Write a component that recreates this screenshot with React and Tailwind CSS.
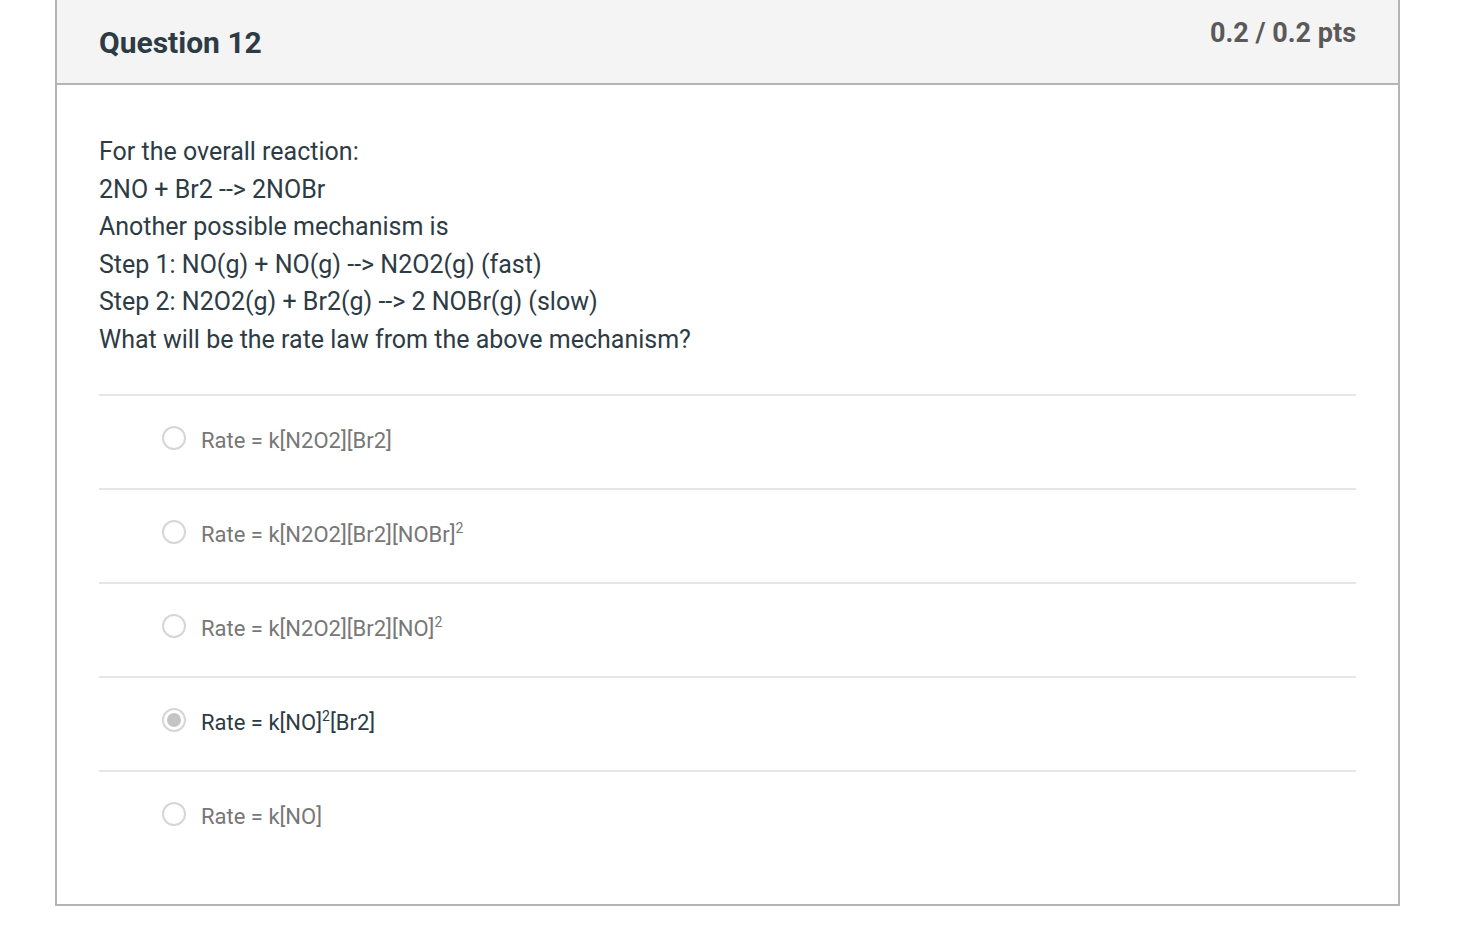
import React from "react";

const Sup = () => <sup className="text-[14px] -top-[9px]">2</sup>;

const options = [
  { label: <>Rate = k[N2O2][Br2]</>, selected: false },
  { label: <>Rate = k[N2O2][Br2][NOBr]<Sup /></>, selected: false },
  { label: <>Rate = k[N2O2][Br2][NO]<Sup /></>, selected: false },
  { label: <>Rate = k[NO]<Sup />[Br2]</>, selected: true },
  { label: <>Rate = k[NO]</>, selected: false },
];

const Radio = ({ selected }) => (
  <span className="w-[24px] h-[24px] rounded-full border-2 border-[#d6d6d6] bg-white flex items-center justify-center shrink-0">
    {selected && <span className="w-[14px] h-[14px] rounded-full bg-[#c4c4c4]" />}
  </span>
);

const App = () => {
  return (
    <div className="min-h-[943px] bg-white font-['Roboto',sans-serif]">
      <div className="ml-[55px] w-[1345px] border-x-2 border-b-2 border-[#b4b4b4] bg-white">
        {/* Header */}
        <div className="h-[85px] bg-[#f4f4f4] border-b-2 border-[#b4b4b4] px-[42px] flex justify-between">
          <h2 className="text-[30px] font-bold text-[#2d3b45] pt-[23px] leading-[40px]">Question 12</h2>
          <span className="text-[27px] font-bold text-[#5a5a5a] pt-[13px] leading-[40px]">0.2 / 0.2 pts</span>
        </div>

        {/* Body */}
        <div className="px-[42px] pt-[48px] pb-[40px]">
          <div className="text-[25px] leading-[37.5px] text-[#2d3b45]">
            <p>For the overall reaction:</p>
            <p>2NO + Br2 --&gt; 2NOBr</p>
            <p>Another possible mechanism is</p>
            <p>Step 1: NO(g) + NO(g) --&gt; N2O2(g) (fast)</p>
            <p>Step 2: N2O2(g) + Br2(g) --&gt; 2 NOBr(g) (slow)</p>
            <p>What will be the rate law from the above mechanism?</p>
          </div>

          <div className="mt-[36px]">
            {options.map((opt, i) => (
              <div key={i} className="h-[94px] border-t-2 border-[#e6e6e6] flex items-center pl-[63px]">
                <div className="flex items-center gap-[15px] -mt-[3px]">
                  <span className="-mt-[6px]">
                    <Radio selected={opt.selected} />
                  </span>
                  <span className={"text-[22px] " + (opt.selected ? "text-[#2d3b45]" : "text-[#777777]")}>
                    {opt.label}
                  </span>
                </div>
              </div>
            ))}
          </div>
        </div>
      </div>
    </div>
  );
};

export default App;
